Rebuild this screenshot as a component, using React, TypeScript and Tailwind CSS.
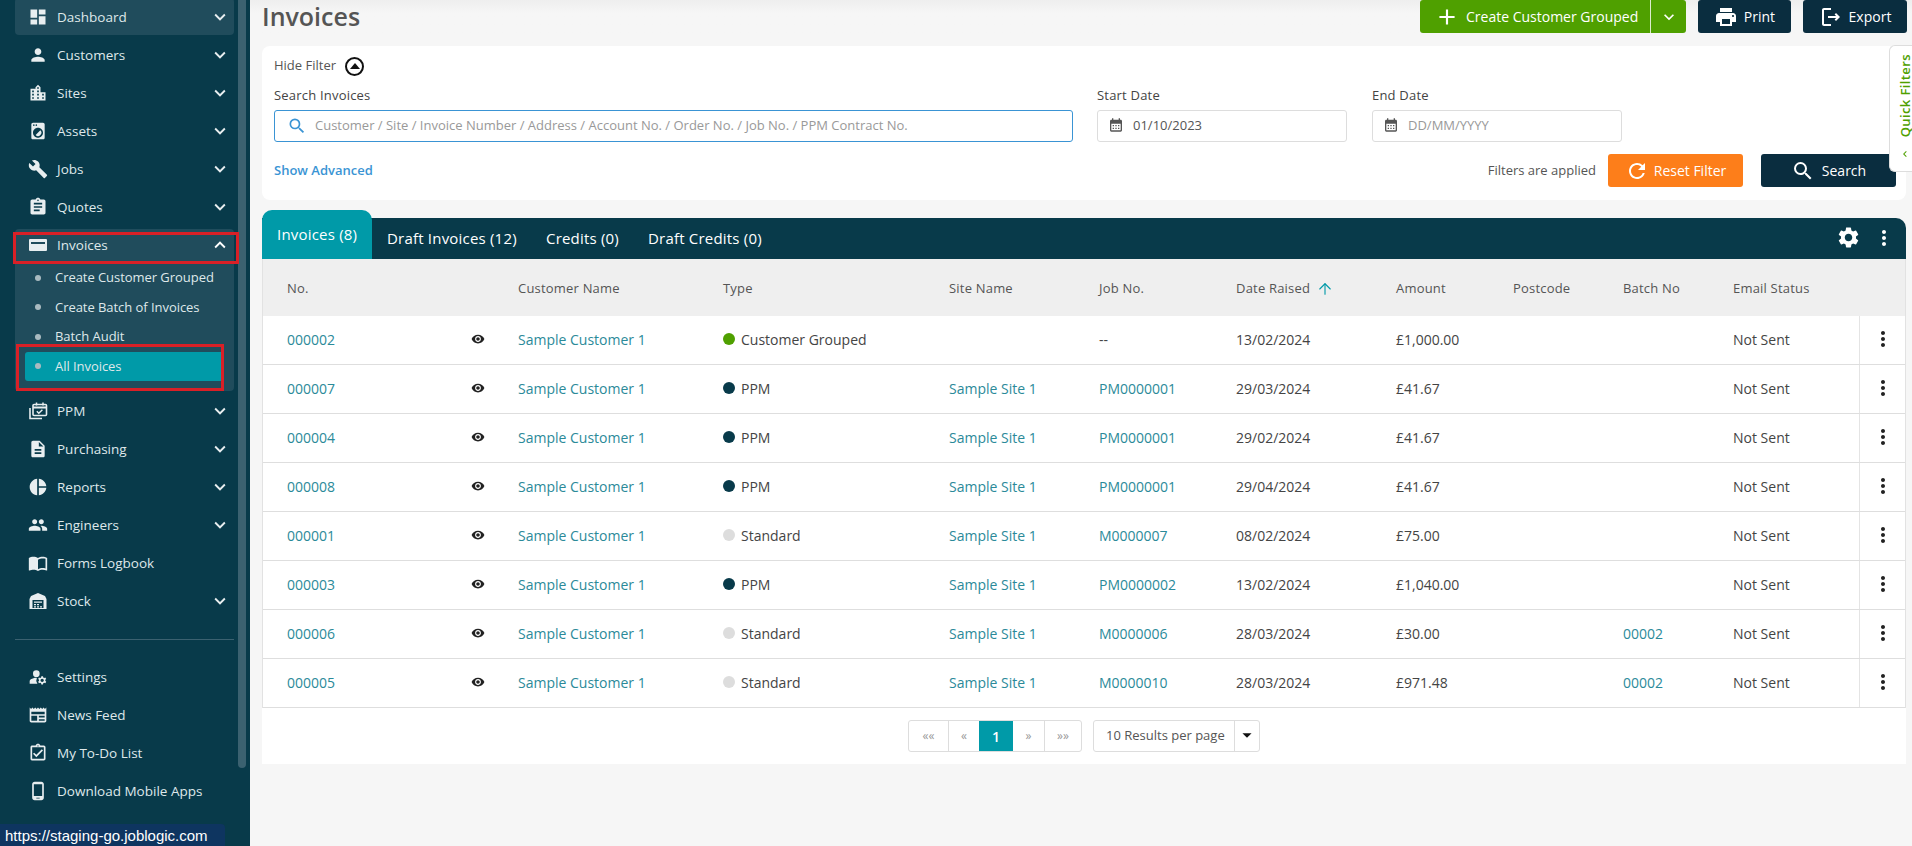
import type { ReactNode } from 'react'
import {
  MdDashboard, MdPerson, MdLocationCity, MdLocalLaundryService, MdBuild, MdAssignment,
  MdDescription, MdPieChart, MdPeople, MdImportContacts,
  MdManageAccounts, MdOutlineNewspaper, MdOutlineAssignmentTurnedIn, MdOutlinePhoneAndroid,
  MdKeyboardArrowDown, MdKeyboardArrowUp, MdAdd, MdPrint, MdOutlineLogout, MdRefresh, MdSearch,
  MdSettings, MdMoreVert, MdRemoveRedEye, MdCalendarMonth, MdArrowDropDown, MdChevronLeft,
} from 'react-icons/md'
import { ArrowUp } from 'lucide-react'

type IconProps = { className?: string }

// invoice card: solid block with a slit
function InvoiceIcon({ className }: IconProps) {
  return (
    <svg viewBox="0 0 20 20" className={className} fill="currentColor">
      <path fillRule="evenodd" d="M2 4h16a1 1 0 0 1 1 1v10a1 1 0 0 1-1 1H2a1 1 0 0 1-1-1V5a1 1 0 0 1 1-1Zm1 3v2h14V7H3Z" />
    </svg>
  )
}

// stacked calendars with a tick
function PpmIcon({ className }: IconProps) {
  return (
    <svg viewBox="0 0 20 20" className={className} fill="none" stroke="currentColor">
      <path d="M2 7v10.5h12" strokeWidth="1.6" />
      <rect x="5" y="3.5" width="13.5" height="11" rx="1" strokeWidth="1.6" />
      <path d="M5 6.5h13.5" strokeWidth="2" />
      <path d="M8.5 1.5v3M15 1.5v3" strokeWidth="1.5" />
      <path d="m8.8 10.2 2 2 3.6-3.4" strokeWidth="1.5" />
    </svg>
  )
}

// warehouse with a dome roof and shelves
function StockIcon({ className }: IconProps) {
  return (
    <svg viewBox="0 0 20 20" className={className} fill="currentColor">
      <path fillRule="evenodd" d="M10 2 3 5 1.5 8v10h17V8L17 5l-7-3ZM4.5 9h11v8h-11V9Z" />
      <path d="M6 10.5h8v1.2H6zM6 13h2v1.2H6zM9 13h2v1.2H9zM6 15.2h2v1.2H6zM9 15.2h2v1.2H9zM12 15.2h2v1.2h-2z" />
    </svg>
  )
}

const NAV_TOP = [
  { label: 'Customers', icon: MdPerson },
  { label: 'Sites', icon: MdLocationCity },
  { label: 'Assets', icon: MdLocalLaundryService },
  { label: 'Jobs', icon: MdBuild },
  { label: 'Quotes', icon: MdAssignment },
]

const NAV_MID = [
  { label: 'PPM', icon: PpmIcon, arrow: true },
  { label: 'Purchasing', icon: MdDescription, arrow: true },
  { label: 'Reports', icon: MdPieChart, arrow: true },
  { label: 'Engineers', icon: MdPeople, arrow: true },
  { label: 'Forms Logbook', icon: MdImportContacts, arrow: false },
  { label: 'Stock', icon: StockIcon, arrow: true },
]

const NAV_BOTTOM = [
  { label: 'Settings', icon: MdManageAccounts },
  { label: 'News Feed', icon: MdOutlineNewspaper },
  { label: 'My To-Do List', icon: MdOutlineAssignmentTurnedIn },
  { label: 'Download Mobile Apps', icon: MdOutlinePhoneAndroid },
]

const ROWS = [
  { no: '000002', type: 'Customer Grouped', dot: 'bg-[#4fa000]', site: '', job: '--', date: '13/02/2024', amount: '£1,000.00', batch: '' },
  { no: '000007', type: 'PPM', dot: 'bg-[#083a4a]', site: 'Sample Site 1', job: 'PM0000001', date: '29/03/2024', amount: '£41.67', batch: '' },
  { no: '000004', type: 'PPM', dot: 'bg-[#083a4a]', site: 'Sample Site 1', job: 'PM0000001', date: '29/02/2024', amount: '£41.67', batch: '' },
  { no: '000008', type: 'PPM', dot: 'bg-[#083a4a]', site: 'Sample Site 1', job: 'PM0000001', date: '29/04/2024', amount: '£41.67', batch: '' },
  { no: '000001', type: 'Standard', dot: 'bg-[#dddddd]', site: 'Sample Site 1', job: 'M0000007', date: '08/02/2024', amount: '£75.00', batch: '' },
  { no: '000003', type: 'PPM', dot: 'bg-[#083a4a]', site: 'Sample Site 1', job: 'PM0000002', date: '13/02/2024', amount: '£1,040.00', batch: '' },
  { no: '000006', type: 'Standard', dot: 'bg-[#dddddd]', site: 'Sample Site 1', job: 'M0000006', date: '28/03/2024', amount: '£30.00', batch: '00002' },
  { no: '000005', type: 'Standard', dot: 'bg-[#dddddd]', site: 'Sample Site 1', job: 'M0000010', date: '28/03/2024', amount: '£971.48', batch: '00002' },
]

const COLS = 'grid grid-cols-[180px_51px_205px_226px_150px_137px_160px_117px_110px_110px_126px_46px] pl-[24px] items-center'

function NavItem({ label, icon: Icon, arrow = true }: { label: string; icon: (p: IconProps) => ReactNode; arrow?: boolean }) {
  return (
    <div className="h-[38px] flex items-center pl-[13px] pr-[3px] text-[13.5px] text-[#dfe8ea]">
      <Icon className="w-[20px] h-[20px] shrink-0 text-[#e8eef0]" />
      <span className="ml-[9px] flex-1">{label}</span>
      {arrow && <MdKeyboardArrowDown className="w-[22px] h-[22px] text-[#e8eef0]" />}
    </div>
  )
}

function SubItem({ label, active }: { label: string; active?: boolean }) {
  return (
    <div className={`h-[29.5px] flex items-center ml-[10px] mr-[12px] pl-[10px] text-[13px] tracking-[-0.05px] text-[#dfe8ea] ${active ? 'bg-[#009aa8] rounded-l-[3px] font-medium' : ''}`}>
      <span className="w-[6px] h-[6px] rounded-full bg-[#a9bac0] mr-[14px]" />
      {label}
    </div>
  )
}

function Field({ label, children, className }: { label: string; children: ReactNode; className: string }) {
  return (
    <div className={className}>
      <div className="text-[13px] font-medium tracking-[0.2px] text-[#444] leading-[18px] mb-[6px]">{label}</div>
      {children}
    </div>
  )
}

function DarkButton({ children, className }: { children: ReactNode; className: string }) {
  return (
    <div className={`h-[33px] bg-[#0a2d3f] rounded-[3px] text-white text-[14px] flex items-center justify-center ${className}`}>
      {children}
    </div>
  )
}

function Link({ children }: { children: ReactNode }) {
  return <span className="text-[#2b8a99]">{children}</span>
}

function Sidebar() {
  return (
    <aside className="w-[250px] shrink-0 h-[846px] bg-[#083a4a] relative overflow-hidden">
      <div className="w-[219px] ml-[15px] -mt-[2px]">
        <div className="bg-[#204c5c] rounded-[4px] h-[37px] -mb-[37px]" />
        <NavItem label="Dashboard" icon={MdDashboard} />
        {NAV_TOP.map(n => <NavItem key={n.label} label={n.label} icon={n.icon} />)}
        <div className="bg-[#204c5c] rounded-[4px] h-[162px] mt-[3px] mb-[1px]">
          <div className="h-[32px] mb-[2px] flex items-center pl-[13px] pr-[3px] text-[13.5px] text-[#dfe8ea]">
            <InvoiceIcon className="w-[20px] h-[20px] text-[#e8eef0]" />
            <span className="ml-[9px] flex-1">Invoices</span>
            <MdKeyboardArrowUp className="w-[22px] h-[22px] text-white" />
          </div>
          <SubItem label="Create Customer Grouped" />
          <SubItem label="Create Batch of Invoices" />
          <SubItem label="Batch Audit" />
          <SubItem label="All Invoices" active />
        </div>
        {NAV_MID.map(n => <NavItem key={n.label} label={n.label} icon={n.icon} arrow={n.arrow} />)}
        <div className="border-t border-[#3b6170] mt-[19px] mb-[18px]" />
        {NAV_BOTTOM.map(n => <NavItem key={n.label} label={n.label} icon={n.icon} arrow={false} />)}
      </div>

      {/* scrollbar */}
      <div className="absolute left-[238px] top-0 w-[8px] h-[768px] bg-[#3b6170] rounded-b-[4px]" />

      {/* annotation boxes from the screenshot */}
      <div className="absolute left-[13px] top-[232px] w-[226px] h-[32px] border-[3px] border-[#d92027]" />
      <div className="absolute left-[16px] top-[344px] w-[208px] h-[47px] border-[3px] border-[#d92027]" />

      {/* browser link preview */}
      <div className="absolute left-0 bottom-0 w-[225px] h-[22px] bg-[#0e3560] rounded-tr-[4px] pl-[5px] text-[15px] leading-[24px] text-white font-['Liberation_Sans',sans-serif]">
        https://staging-go.joblogic.com
      </div>
    </aside>
  )
}

function FilterCard() {
  return (
    <section className="mt-[13px] mr-[6px] h-[154px] bg-white rounded-[8px] px-[12px] pt-[10px] relative">
      <div className="flex items-center h-[20px] text-[13px] text-[#555]">
        Hide Filter
        <span className="ml-[9px] w-[19px] h-[19px] rounded-full border-2 border-[#111] flex items-center justify-center">
          <span className="w-0 h-0 border-x-[5px] border-x-transparent border-b-[6px] border-b-[#111] -mt-[1px]" />
        </span>
      </div>
      <div className="flex mt-[10px]">
        <Field label="Search Invoices" className="w-[799px]">
          <div className="h-[32px] border border-[#3a94d4] rounded-[3px] flex items-center pl-[12px] text-[13px] text-[#999]">
            <MdSearch className="w-[20px] h-[20px] text-[#3a94d4] shrink-0" />
            <span className="ml-[8px]">Customer / Site / Invoice Number / Address / Account No. / Order No. / Job No. / PPM Contract No.</span>
          </div>
        </Field>
        <Field label="Start Date" className="w-[250px] ml-[24px]">
          <div className="h-[32px] border border-[#ddd] rounded-[3px] flex items-center pl-[10px] text-[13px] text-[#555]">
            <MdCalendarMonth className="w-[16px] h-[16px] text-[#555] -mt-[3px]" />
            <span className="ml-[9px]">01/10/2023</span>
          </div>
        </Field>
        <Field label="End Date" className="w-[250px] ml-[25px]">
          <div className="h-[32px] border border-[#ddd] rounded-[3px] flex items-center pl-[10px] text-[13px] text-[#999]">
            <MdCalendarMonth className="w-[16px] h-[16px] text-[#555] -mt-[3px]" />
            <span className="ml-[9px]">DD/MM/YYYY</span>
          </div>
        </Field>
      </div>
      <div className="flex items-center mt-[12px] -mr-[2px]">
        <span className="text-[13px] font-semibold text-[#3a94d4]">Show Advanced</span>
        <span className="ml-auto text-[13px] text-[#555]">Filters are applied</span>
        <div className="ml-[12px] w-[135px] h-[33px] bg-[#fd7e1a] rounded-[3px] text-white text-[14px] flex items-center justify-center">
          <MdRefresh className="w-[24px] h-[24px] mr-[5px]" />
          Reset Filter
        </div>
        <DarkButton className="w-[135px] ml-[18px]">
          <MdSearch className="w-[24px] h-[24px] mr-[7px]" />
          Search
        </DarkButton>
      </div>
    </section>
  )
}

function InvoiceTable() {
  return (
    <section className="mt-[10px] mr-[6px]">
      <div className="relative h-[49px] flex items-end">
        <div className="absolute left-0 right-0 bottom-0 h-[41px] bg-[#083a4a] rounded-tr-[10px]" />
        <div className="relative w-[110px] h-[49px] bg-[#009aa8] rounded-t-[10px] text-white text-[15px] tracking-[0.2px] pl-[15px] pt-[13px]">Invoices (8)</div>
        <div className="relative h-[41px] flex items-center text-white text-[15px] tracking-[0.2px] pl-[15px]">
          <span className="w-[159px]">Draft Invoices (12)</span>
          <span className="w-[102px]">Credits (0)</span>
          <span>Draft Credits (0)</span>
        </div>
        <div className="absolute right-[10px] bottom-[9px] flex items-center text-white">
          <MdSettings className="w-[25px] h-[25px]" />
          <MdMoreVert className="w-[24px] h-[24px] ml-[11px]" />
        </div>
      </div>

      <div className="bg-white border-x border-[#e2e2e2] text-[14px] text-[#444]">
        <div className={`${COLS} h-[57px] bg-[#efefef] text-[13px] font-medium tracking-[0.2px] text-[#555] pt-[3px]`}>
          <span>No.</span>
          <span />
          <span>Customer Name</span>
          <span>Type</span>
          <span>Site Name</span>
          <span>Job No.</span>
          <span className="flex items-center">Date Raised <ArrowUp className="w-[18px] h-[18px] ml-[6px] text-[#009aa8]" strokeWidth={1.5} /></span>
          <span>Amount</span>
          <span>Postcode</span>
          <span>Batch No</span>
          <span>Email Status</span>
          <span />
        </div>
        {ROWS.map(r => (
          <div key={r.no} className={`${COLS} h-[49px] border-b border-[#dedede] pb-[2px]`}>
            <Link>{r.no}</Link>
            <MdRemoveRedEye className="w-[14px] h-[14px] ml-[4px] text-[#222]" />
            <Link>Sample Customer 1</Link>
            <span className="flex items-center"><span className={`w-[12px] h-[12px] rounded-full mr-[6px] ${r.dot}`} />{r.type}</span>
            <Link>{r.site}</Link>
            {r.job === '--' ? <span>--</span> : <Link>{r.job}</Link>}
            <span>{r.date}</span>
            <span>{r.amount}</span>
            <span />
            <Link>{r.batch}</Link>
            <span>Not Sent</span>
            <div className="h-[48px] -mb-[2px] border-l border-[#e4e4e4] flex items-center justify-center">
              <MdMoreVert className="w-[24px] h-[24px] text-[#222] -mt-[2px]" />
            </div>
          </div>
        ))}
      </div>

      <div className="h-[56px] bg-white pt-[12px] flex justify-center">
        <div className="flex h-[32px] border border-[#ddd] rounded-[3px] text-[12px] text-[#999]">
          <span className="w-[39px] flex items-center justify-center">««</span>
          <span className="w-[31px] flex items-center justify-center border-l border-[#ddd]">«</span>
          <span className="w-[34px] flex items-center justify-center bg-[#009aa8] text-white text-[14px] font-semibold">1</span>
          <span className="w-[31px] flex items-center justify-center">»</span>
          <span className="w-[37px] flex items-center justify-center border-l border-[#ddd]">»»</span>
        </div>
        <div className="flex h-[32px] ml-[11px] border border-[#ddd] rounded-[3px] text-[13px] text-[#555]">
          <span className="w-[140px] flex items-center pl-[12px]">10 Results per page</span>
          <span className="w-[25px] flex items-center justify-center border-l border-[#ddd]">
            <MdArrowDropDown className="w-[22px] h-[22px] text-[#111] -mt-[3px]" />
          </span>
        </div>
      </div>
    </section>
  )
}

export default function App() {
  return (
    <div className="w-[1912px] h-[846px] flex overflow-hidden bg-[#f6f6f6] font-['Open_Sans',sans-serif]">
      <Sidebar />
      <main className="flex-1 pl-[12px] relative">
        <header className="h-[33px] -ml-[12px] pl-[12px] flex items-center bg-linear-to-b from-[#eeeeee] to-[#f6f6f6] to-40%">
          <h1 className="text-[25px] font-semibold text-[#555] leading-[33px] -mt-[1px]">Invoices</h1>
          <div className="ml-auto flex mr-[5px]">
            <div className="w-[266px] h-[33px] bg-[#4fa000] rounded-[3px] text-white text-[14px] flex items-center">
              <MdAdd className="w-[26px] h-[26px] ml-[14px]" />
              <span className="ml-[6px] w-[184px]">Create Customer Grouped</span>
              <span className="w-[36px] h-full border-l border-white/80 flex items-center justify-center">
                <MdKeyboardArrowDown className="w-[20px] h-[20px]" />
              </span>
            </div>
            <DarkButton className="w-[93px] ml-[12px]">
              <MdPrint className="w-[24px] h-[24px] mr-[6px]" />
              Print
            </DarkButton>
            <DarkButton className="w-[104px] ml-[12px]">
              <MdOutlineLogout className="w-[24px] h-[24px] mr-[6px]" />
              Export
            </DarkButton>
          </div>
        </header>
        <FilterCard />
        <InvoiceTable />

        {/* quick filters tab */}
        <div className="absolute right-0 top-[45px] w-[23px] h-[127px] bg-white border border-r-0 border-[#ddd] rounded-l-[6px] flex flex-col items-center pt-[8px]">
          <span className="[writing-mode:vertical-rl] rotate-180 text-[13px] leading-[14px] font-semibold tracking-[0.4px] text-[#4fa000] ml-[8px] whitespace-nowrap">Quick Filters</span>
          <MdChevronLeft className="w-[12px] h-[12px] text-[#4fa000] mt-[11px] ml-[8px]" />
        </div>
      </main>
    </div>
  )
}
